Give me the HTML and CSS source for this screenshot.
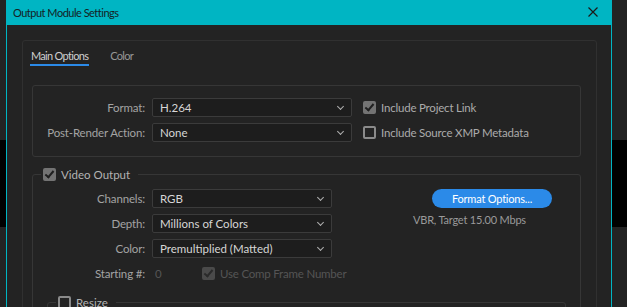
FILE: index.html
```html
<!DOCTYPE html>
<html lang="en">
<head>
  <meta charset="UTF-8">
  <title>Output Module Settings</title>
  <link rel="stylesheet" href="styles.css">
</head>
<body>
  <div class="screen">
    <div class="edge edge-left"></div>

    <div class="dialog">
      <div class="titlebar">
        <span class="title">Output Module Settings</span>
        <svg class="close" width="10" height="10" viewBox="0 0 10 10">
          <path d="M0.5 0.5 L9.5 9.5 M9.5 0.5 L0.5 9.5" stroke="#1a1a1a" stroke-width="1.2" fill="none"/>
        </svg>
      </div>

      <div class="dialog-body">
        <div class="panel">
          <div class="tabs">
            <span class="tab tab-active">Main Options</span>
            <span class="tab">Color</span>
          </div>

          <!-- format / post-render -->
          <div class="group">
            <div class="row">
              <label class="label">Format:</label>
              <div class="select select-wide">H.264<span class="chev"></span></div>
              <span class="check checked"></span>
              <span class="check-label">Include Project Link</span>
            </div>
            <div class="row">
              <label class="label">Post-Render Action:</label>
              <div class="select select-wide">None<span class="chev"></span></div>
              <span class="check"></span>
              <span class="check-label">Include Source XMP Metadata</span>
            </div>
          </div>

          <!-- video output -->
          <fieldset class="fieldset">
            <legend class="legend"><span class="check checked"></span><span class="legend-text">Video Output</span></legend>
            <div class="video">
              <div class="video-rows">
                <div class="row">
                  <label class="label">Channels:</label>
                  <div class="select">RGB<span class="chev"></span></div>
                </div>
                <div class="row">
                  <label class="label">Depth:</label>
                  <div class="select">Millions of Colors<span class="chev"></span></div>
                </div>
                <div class="row">
                  <label class="label">Color:</label>
                  <div class="select">Premultiplied (Matted)<span class="chev"></span></div>
                </div>
                <div class="row">
                  <label class="label">Starting #:</label>
                  <span class="dim-value">0</span>
                  <span class="check checked disabled"></span>
                  <span class="check-label dim">Use Comp Frame Number</span>
                </div>
              </div>
              <div class="video-side">
                <button class="btn-primary">Format Options...</button>
                <div class="bitrate">VBR, Target 15.00 Mbps</div>
              </div>
            </div>

            <fieldset class="fieldset fieldset-inner">
              <legend class="legend"><span class="check"></span><span class="legend-text">Resize</span></legend>
              <div class="spacer"></div>
            </fieldset>
          </fieldset>
        </div>
      </div>
    </div>

    <div class="edge edge-right"></div>
  </div>
</body>
</html>
```

FILE: styles.css
```css
:root {
  --cyan: #00b5c3;
  --bg: #232323;
  --line: #363636;
  --field-bg: #1d1d1d;
  --field-line: #3b3b3b;
  --label: #a3a3a3;
  --value: #d6d6d6;
  --blue: #2b8ae8;
}

html, body {
  margin: 0;
  height: 307px;
  overflow: hidden;
  background-color: var(--bg);
  font-family: Lato, 'Open Sans', sans-serif;
  font-size: 11.5px;
}

.screen {
  display: flex;
  height: 307px;
}

.edge {
  flex: none;
  background: linear-gradient(to bottom, var(--bg) 0, var(--bg) 140px, #000 140px, #000 227px, var(--bg) 227px);
}

.edge-left {
  width: 6px;
}

.edge-right {
  width: 16px;
}

.dialog {
  flex: none;
  width: 604px;
  border-left: 1px solid var(--cyan);
  border-right: 1px solid var(--cyan);
  background-color: var(--bg);
}

.titlebar {
  height: 25px;
  background-color: var(--cyan);
  display: flex;
  align-items: center;
  justify-content: space-between;
  padding: 0 13px 0 6px;
  box-sizing: border-box;
}

.title {
  color: #152224;
  font-size: 11px;
  letter-spacing: -0.5px;
}

.close {
  margin-top: -2px;
}

.dialog-body {
  padding: 15px 14px 0 15px;
}

.panel {
  border: 1px solid #303030;
  border-radius: 3px;
  padding: 0 15px 0 9px;
  height: 300px;
}

.tabs {
  display: flex;
  gap: 20px;
  margin-left: -2px;
  height: 25px;
  align-items: flex-end;
}

.tab {
  color: #979797;
  font-size: 11px;
  padding: 0 1px 1px;
  line-height: 14px;
  letter-spacing: -0.7px;
  border-bottom: 2px solid transparent;
}

.tab-active {
  color: #cfcfcf;
  border-bottom-color: var(--blue);
}

.group {
  margin-top: 19px;
  border: 1px solid var(--line);
  border-radius: 3px;
  padding: 12px 0 14px;
  display: flex;
  flex-direction: column;
  gap: 6px;
}

.row {
  display: flex;
  align-items: center;
  height: 19px;
  white-space: nowrap;
}

.label {
  width: 112px;
  text-align: right;
  color: var(--label);
  letter-spacing: -0.15px;
  margin-right: 7px;
  flex: none;
}

.select {
  position: relative;
  box-sizing: border-box;
  width: 180px;
  height: 19px;
  background-color: var(--field-bg);
  border: 1px solid var(--field-line);
  border-radius: 2px;
  color: var(--value);
  padding-left: 7px;
  line-height: 17px;
  flex: none;
}

.select-wide {
  width: 200px;
}

.chev {
  position: absolute;
  right: 8px;
  top: 5px;
  width: 4px;
  height: 4px;
  border-right: 1px solid #b0b0b0;
  border-bottom: 1px solid #b0b0b0;
  transform: rotate(45deg);
}

.check {
  box-sizing: border-box;
  display: inline-block;
  flex: none;
  width: 13px;
  height: 13px;
  border: 2px solid #8a8a8a;
  border-radius: 2px;
  margin-left: 11px;
  position: relative;
}

.check.checked {
  background-color: #737373;
  border-color: #737373;
}

.check.checked::after {
  content: "";
  position: absolute;
  left: 2px;
  top: -1px;
  width: 3px;
  height: 7px;
  border-right: 2px solid #1f1f1f;
  border-bottom: 2px solid #1f1f1f;
  transform: rotate(40deg);
}

.check.disabled {
  background-color: #4a4a4a;
  border-color: #4a4a4a;
}

.check.disabled::after {
  border-color: #2a2a2a;
}

.check-label {
  color: #ababab;
  letter-spacing: -0.2px;
  margin-left: 5px;
}

.check-label.dim {
  color: #555555;
}

.dim-value {
  color: #555555;
  width: 47px;
  padding-left: 3px;
  flex: none;
}

.dim-value + .check {
  margin-left: 0;
}

.fieldset {
  margin: 10px 0 0;
  border: 1px solid var(--line);
  border-radius: 3px;
  padding: 0;
  min-width: 0;
}

.legend {
  display: flex;
  align-items: center;
  padding: 0 8px 0 2px;
  margin-left: 8px;
  height: 14px;
}

.legend .check {
  margin-left: 0;
}

.legend-text {
  color: #b3b3b3;
  margin-left: 5px;
}

.video {
  display: flex;
  padding-top: 8px;
}

.video-rows {
  width: 299px;
  flex: none;
  display: flex;
  flex-direction: column;
  gap: 6px;
}

.video-side {
  margin-left: 100px;
  display: flex;
  flex-direction: column;
  align-items: flex-start;
}

.btn-primary {
  width: 120px;
  height: 19px;
  border: none;
  border-radius: 10px;
  background-color: var(--blue);
  color: #ffffff;
  font-family: inherit;
  font-size: 11px;
  letter-spacing: -0.2px;
  padding: 0;
}

.bitrate {
  color: #9a9a9a;
  font-size: 11px;
  letter-spacing: -0.2px;
  margin: 5px 0 0 -19px;
}

.fieldset-inner {
  margin: 12px 14px 0 14px;
}

.spacer {
  height: 40px;
}
```
